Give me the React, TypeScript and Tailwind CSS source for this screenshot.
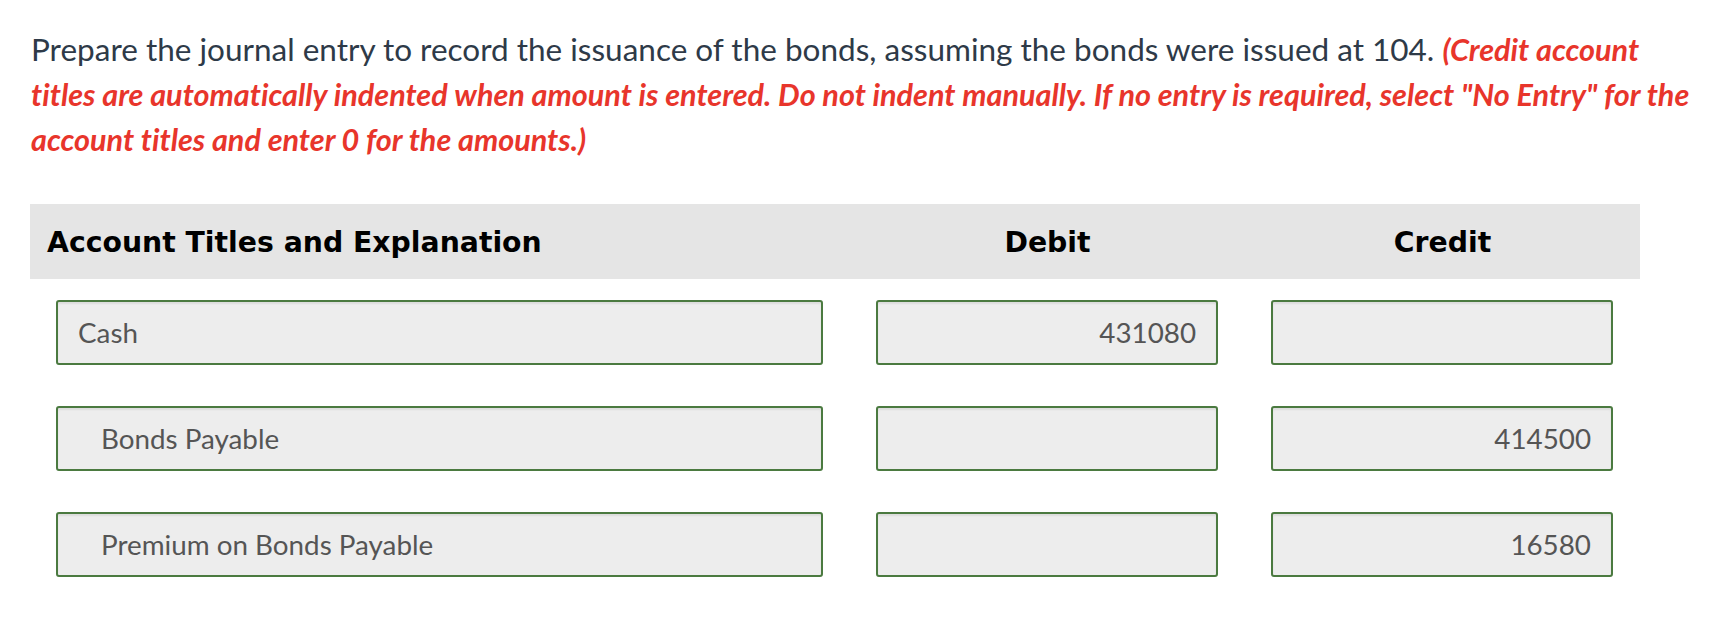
import React from 'react'

type Row = { title: string; indent?: boolean; debit: string; credit: string }

const rows: Row[] = [
  { title: 'Cash', debit: '431080', credit: '' },
  { title: 'Bonds Payable', indent: true, debit: '', credit: '414500' },
  { title: 'Premium on Bonds Payable', indent: true, debit: '', credit: '16580' },
]

function Field({ value, right, indent }: { value: string; right?: boolean; indent?: boolean }) {
  return (
    <input
      readOnly
      value={value}
      className={
        'w-full h-[65px] rounded-[3px] border-2 border-[#4b7a40] bg-[#ededed] text-[27.8px] text-[#555555] outline-none shadow-[inset_0_2px_2px_rgba(0,0,0,0.07)] font-["Lato",sans-serif] [font-variant-ligatures:none] ' +
        (right ? 'text-right pr-[20px]' : indent ? 'pl-[43px]' : 'pl-[20px]')
      }
    />
  )
}

export default function App() {
  return (
    <div className="w-[1718px] h-[626px] bg-white font-['Lato',sans-serif] [font-variant-ligatures:none]">
      <p className="pl-[31px] pr-[12px] pt-[27px] text-[31.5px] leading-[45px] text-[#2e3a48]">
        Prepare the journal entry to record the issuance of the bonds, assuming the bonds were issued at 104.{' '}
        <span className="font-bold italic text-[30.6px] text-[#e8352b]">
          (Credit account titles are automatically indented when amount is entered. Do not indent manually. If no entry
          is required, select "No Entry" for the account titles and enter 0 for the amounts.)
        </span>
      </p>

      <div className="ml-[30px] mt-[42px] w-[1610px]">
        <div className="grid grid-cols-[820px_395px_395px] h-[75px] items-center pt-[3px] bg-[#e5e5e5] text-[28.3px] font-bold text-black font-['DejaVu_Sans',sans-serif]">
          <div className="pl-[17px]">Account Titles and Explanation</div>
          <div className="text-center">Debit</div>
          <div className="text-center">Credit</div>
        </div>

        <div className="flex flex-col gap-[41px] pt-[21px]">
          {rows.map(r => (
            <div key={r.title} className="grid grid-cols-[820px_395px_395px]">
              <div className="pl-[26px] pr-[27px]">
                <Field value={r.title} indent={r.indent} />
              </div>
              <div className="pl-[26px] pr-[27px]">
                <Field value={r.debit} right />
              </div>
              <div className="pl-[26px] pr-[27px]">
                <Field value={r.credit} right />
              </div>
            </div>
          ))}
        </div>
      </div>
    </div>
  )
}
